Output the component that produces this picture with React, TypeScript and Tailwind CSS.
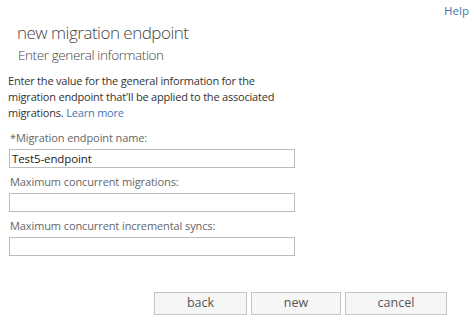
import React from 'react';

const fields = [
  { label: '*Migration endpoint name:', value: 'Test5-endpoint' },
  { label: 'Maximum concurrent migrations:', value: '' },
  { label: 'Maximum concurrent incremental syncs:', value: '' },
];

export default function App() {
  return (
    <div className="w-[474px] h-[321px] bg-white flex flex-col text-[#333] font-['Open_Sans',sans-serif] overflow-hidden">
      {/* Help link */}
      <div className="h-[21px] flex justify-end pr-[5px] pt-[3px]">
        <a className="text-[11.5px] leading-[16px] text-[#3f74b3]">Help</a>
      </div>

      {/* Heading */}
      <h1 className="ml-[17px] text-[17px] leading-[24px] font-light tracking-[-0.5px] text-[#444]">new migration endpoint</h1>
      <h2 className="ml-[18px] text-[13.5px] leading-[20px] font-light tracking-[-0.4px] text-[#444]">Enter general information</h2>

      {/* Description */}
      <p className="ml-[8px] mt-[8px] w-[285px] text-[11px] leading-[16px] tracking-[-0.2px] text-[#333]">
        Enter the value for the general information for the migration endpoint that'll be applied to the associated
        migrations. <a className="text-[#3f74b3]">Learn more</a>
      </p>

      {/* Fields */}
      <div className="mt-[9px] flex flex-col gap-[6px]">
        {fields.map((f) => (
          <div key={f.label} className="flex flex-col">
            <label className="ml-[10px] text-[11px] leading-[16px] tracking-[-0.1px] text-[#666]">{f.label}</label>
            <div className="ml-[9px] mt-[3px] w-[286px] h-[19px] border border-[#bdbdbd] bg-white flex items-center px-[2px] text-[11.5px] tracking-[-0.1px] text-[#222]">
              {f.value}
            </div>
          </div>
        ))}
      </div>

      {/* Buttons */}
      <div className="mt-auto mb-[6px] flex gap-[4px] pl-[154px]">
        <button className="w-[93px] h-[23px] border border-[#c4c4c4] bg-[#f6f6f6] text-[12.5px] text-[#555]">back</button>
        <button className="w-[90px] h-[23px] border border-[#c4c4c4] bg-[#f6f6f6] text-[12.5px] text-[#555]">new</button>
        <button className="w-[102px] h-[23px] border border-[#c4c4c4] bg-[#f6f6f6] text-[12.5px] text-[#555]">cancel</button>
      </div>
    </div>
  );
}
